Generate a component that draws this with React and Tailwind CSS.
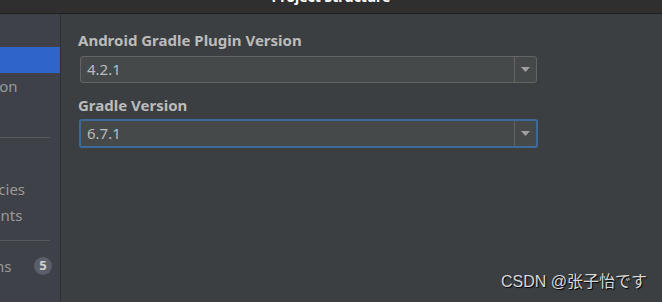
import React from 'react';

const sans = { fontFamily: '"Noto Sans", "Open Sans", sans-serif' };

const Combo = ({ value, focused }) => (
    <div
        className={
            focused
                ? 'ml-[1px] w-[459px] h-[29px] rounded-[3px] border-2 border-[#3d6a9a] bg-[#45494a] flex'
                : 'ml-[2px] w-[457px] h-[27px] rounded-[3px] border border-[#646464] bg-[#45494a] flex'
        }
    >
        <div className="flex-1 flex items-center pl-[6px] text-[15px] text-[#bbbbbb]">{value}</div>
        <div className="w-[22px] border-l border-[#646464] flex items-center justify-center">
            <svg width="9" height="5" viewBox="0 0 9 5">
                <path d="M0 0 L9 0 L4.5 5 Z" fill="#a0a0a0" />
            </svg>
        </div>
    </div>
);

const SideItem = ({ label, selected, badge }) => (
    <div className={`h-[26px] flex items-center ${selected ? 'bg-[#2f65ca]' : ''}`}>
        <span className="ml-[-75px] whitespace-nowrap text-[15px] text-[#9a9a9a]">{label}</span>
        {badge && (
            <span className="ml-auto mr-[8px] w-[18px] h-[18px] rounded-full bg-[#5a5f6b] text-[#d0d0d0] text-[13px] font-bold flex items-center justify-center">
                {badge}
            </span>
        )}
    </div>
);

const Separator = () => (
    <div className="h-[25px] flex items-center">
        <div className="w-[50px] h-px bg-[#55585c]" />
    </div>
);

const App = () => {
    return (
        <div className="w-[662px] h-[302px] overflow-hidden bg-[#3c3f41] flex flex-col" style={sans}>
            {/* title bar */}
            <div className="h-[14px] shrink-0 bg-[#2f2f2f] border-b border-[#1f1f1f] flex justify-center overflow-hidden">
                <span className="mt-[-14px] text-[14px] font-bold text-white">Project Structure</span>
            </div>

            <div className="flex flex-1 min-h-0">
                {/* sidebar */}
                <div className="w-[61px] shrink-0 bg-[#3e4148] border-r border-[#2e3033] overflow-hidden pt-[33px]">
                    <SideItem label="Project" selected />
                    <SideItem label="SDK Location" />
                    <SideItem label="Variables" />
                    <Separator />
                    <SideItem label="Modules" />
                    <SideItem label="Dependencies" />
                    <SideItem label="Build Variants" />
                    <Separator />
                    <SideItem label="Suggestions" badge="5" />
                </div>

                {/* content */}
                <div className="flex-1 pl-[17px] pt-[16px] relative">
                    <div className="text-[15px] font-bold text-[#bbbbbb] leading-[20px]">Android Gradle Plugin Version</div>
                    <div className="mt-[6px]">
                        <Combo value="4.2.1" />
                    </div>
                    <div className="mt-[12px] text-[15px] font-bold text-[#bbbbbb] leading-[20px]">Gradle Version</div>
                    <div className="mt-[4px]">
                        <Combo value="6.7.1" focused />
                    </div>

                    <div
                        className="absolute right-[15px] bottom-[8px] text-[16px] text-[#d8d8d8]"
                        style={{ fontFamily: '"Liberation Sans", "Noto Sans CJK JP", sans-serif', textShadow: '1px 1px 1px #000' }}
                    >
                        CSDN @张子怡です
                    </div>
                </div>
            </div>
        </div>
    );
};

export default App;
